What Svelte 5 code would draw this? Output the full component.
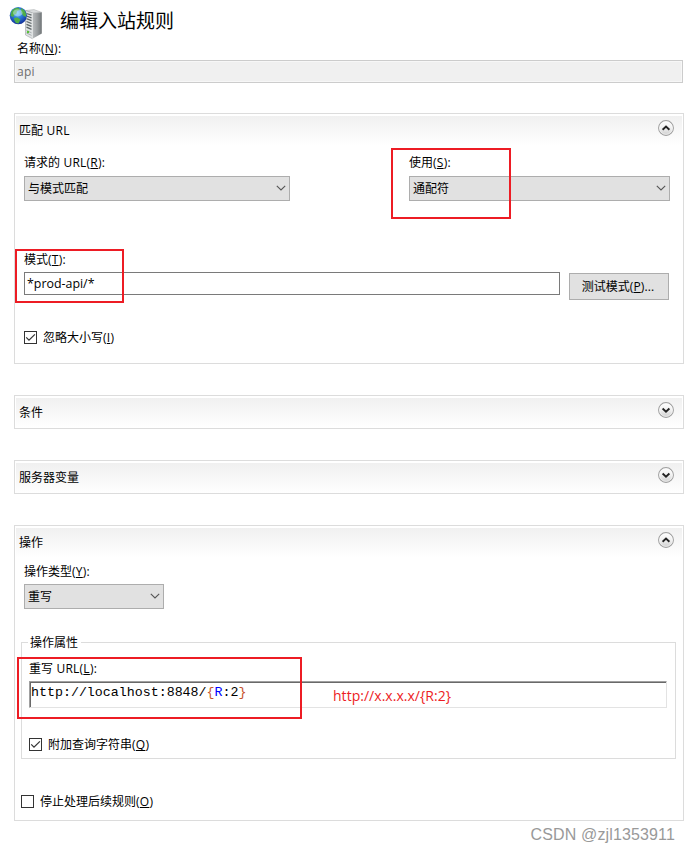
<script>
  let ignoreCase = $state(true);
  let appendQuery = $state(true);
  let stopProcessing = $state(false);
</script>

{#snippet label(text, latin, key, tail = '')}
  <span class="label">{text}{#if latin}<span class="latin">{latin}</span>{/if}<span class="latin">(<u>{key}</u>){tail}</span></span>
{/snippet}

{#snippet toggle(open)}
  <svg class="toggle" width="16" height="16" viewBox="0 0 16 16">
    <defs>
      <linearGradient id="knob" x1="0" y1="0" x2="0" y2="1">
        <stop offset="0" stop-color="#fff" />
        <stop offset="0.5" stop-color="#f0f0f0" />
        <stop offset="1" stop-color="#cccccc" />
      </linearGradient>
    </defs>
    <circle cx="8" cy="8" r="7.4" fill="url(#knob)" stroke="#a0a0a0" stroke-width="1.1" />
    <circle cx="8" cy="8" r="6.4" fill="none" stroke="#fff" stroke-width="0.6" />
    <path d={open ? 'M4.6 9.7 8 6.6l3.4 3.1' : 'M4.6 6.5 8 9.6l3.4-3.1'} fill="none" stroke="#222" stroke-width="1.9" />
  </svg>
{/snippet}

{#snippet select(text, cls)}
  <div class="select {cls}">
    <span>{text}</span>
    <svg width="10" height="6" viewBox="0 0 10 6"><path d="M.8.8 5 4.9 9.2.8" fill="none" stroke="#555" stroke-width="1.1" /></svg>
  </div>
{/snippet}

{#snippet check(on)}
  <svg class="check" width="13" height="13" viewBox="0 0 13 13">
    <rect x=".5" y=".5" width="12" height="12" fill="#fff" stroke="#333" />
    {#if on}<path d="M2.2 6.3 5 9.2 10.9 3.3" fill="none" stroke="#333" stroke-width="1.2" />{/if}
  </svg>
{/snippet}

<main>
  <header>
    <svg class="logo" width="34" height="34" viewBox="0 0 34 34">
      <defs>
        <radialGradient id="globe" cx=".45" cy=".35" r=".65">
          <stop offset="0" stop-color="#6fc4fb" />
          <stop offset=".5" stop-color="#2a78d6" />
          <stop offset="1" stop-color="#14309a" />
        </radialGradient>
        <linearGradient id="side">
          <stop offset="0" stop-color="#b9bcbe" />
          <stop offset=".5" stop-color="#9b9fa1" />
          <stop offset="1" stop-color="#6f7476" />
        </linearGradient>
      </defs>
      <path d="M16.5 4.5 25 3.6 32.8 6.4 24 7Z" fill="#d9dcdd" stroke="#a4a8aa" stroke-width=".5" />
      <path d="M23.5 7 32.8 6.4V27.5L23.5 32.8Z" fill="url(#side)" />
      <path d="M16.5 4.5 23.5 7V32.8L16.5 29Z" fill="#dfe2e3" stroke="#8d9294" stroke-width=".5" />
      <path d="M17.5 7.5 22.5 9.2M17.5 10 22.5 11.8M17.5 12.7 22.5 14.6M17.5 15.5 22.5 17.5M17.5 18.3 22.5 20.4M17.5 21.2 22.5 23.3" stroke="#5e6668" stroke-width="1.3" />
      <path d="M17.5 24.5 22.5 26.8M17.5 27 22.5 29.4" stroke="#a7adaf" />
      <path d="M23.5 7V32.8" stroke="#f1f3f3" stroke-width=".7" />
      <circle cx="19" cy="26" r="1.2" fill="#55c236" />
      <circle cx="9.3" cy="9.6" r="8.6" fill="url(#globe)" />
      <path d="M2.5 5.3C4.5 2.4 7 1.3 9.5 1.8L11 4 8 5 7.5 7.5 5 9 4.5 11 1.5 10ZM12 2 15.5 4.5 17.2 8 16.8 11 14 9.5 12 6ZM5 12 8.5 11.5 11.5 13.5 9.5 17.5 7 17 5.5 14.5Z" fill="#4fae49" />
      <ellipse cx="8.8" cy="6.8" rx="4.8" ry="3.6" fill="#d9f2ff" opacity=".45" />
    </svg>
    <h1>编辑入站规则</h1>
  </header>
  <div class="name-label">{@render label('名称', '', 'N', ':')}</div>
  <div class="name-input latin">api</div>

  <section class="panel match">
    <div class="head"><span>匹配<span class="latin wide">&nbsp;URL</span></span>{@render toggle(true)}</div>
    <div class="selects">
      <div class="field">{@render label('请求的', '\u00a0URL', 'R', ':')}{@render select('与模式匹配', 'w-url')}</div>
      <div class="field">{@render label('使用', '', 'S', ':')}{@render select('通配符', 'w-using')}
        <div class="mark using"></div>
      </div>
    </div>
    <div class="pattern">
      <div class="field">{@render label('模式', '', 'T', ':')}
        <div class="text-input latin">*prod-api/*</div>
        <div class="mark pat"></div>
      </div>
      <button>测试模式<span class="latin">(<u>P</u>)...</span></button>
    </div>
    <div class="row ignore">{@render check(ignoreCase)}{@render label('忽略大小写', '', 'I')}</div>
  </section>

  <section class="panel closed"><div class="head"><span>条件</span>{@render toggle(false)}</div></section>
  <section class="panel closed"><div class="head"><span>服务器变量</span>{@render toggle(false)}</div></section>

  <section class="panel action">
    <div class="head"><span>操作</span>{@render toggle(true)}</div>
    <div class="field type">{@render label('操作类型', '', 'Y', ':')}{@render select('重写', 'w-type')}</div>
    <div class="group">
      <span class="legend">操作属性</span>
      {@render label('重写', '\u00a0URL', 'L', ':')}
      <div class="rewrite"><code>http://localhost:8848/<i>{'{'}</i><b>R</b>:2<i>{'}'}</i></code></div>
      <div class="row">{@render check(appendQuery)}{@render label('附加查询字符串', '', 'Q')}</div>
      <div class="mark url"></div>
      <span class="note">http://x.x.x.x/{'{R:2}'}</span>
    </div>
    <div class="row stop">{@render check(stopProcessing)}{@render label('停止处理后续规则', '', 'O')}</div>
  </section>
  <footer>CSDN @zjl1353911</footer>
</main>

<style>
  :global(body) { background: #fff; }
  main, main * { box-sizing: border-box; }
  main {
    width: 689px; height: 852px; padding: 0 5px 0 14px; overflow: hidden;
    display: flex; flex-direction: column;
    font: 12px/16px "Noto Sans CJK SC", sans-serif; color: #000;
  }
  .latin { font-family: "Open Sans", "Noto Sans", sans-serif; line-height: 1; }
  .label .latin { letter-spacing: 0.25px; }
  .latin.wide { letter-spacing: 0.3px; }
  .label, .select span { white-space: nowrap; }
  u { text-decoration: underline; text-underline-offset: 1px; text-decoration-thickness: 1px; text-decoration-skip-ink: none; }
  header { display: flex; height: 40px; margin-left: -5px; }
  .logo { margin-top: 6px; flex: none; }
  h1 { margin: 6px 0 0 17px; font-size: 19px; line-height: 28px; font-weight: 400; }
  .name-label { height: 20px; padding-left: 3px; display: flex; }
  .name-label .label, .name-label { line-height: 15px; }
  .name-input { height: 23px; width: 669px; border: 1px solid #ccc; background: #f0f0f0; color: #6d6d6d; padding-left: 2px; line-height: 21px; letter-spacing: .3px; box-shadow: inset 0 0 0 1px #f7f7f7; }
  .panel { border: 1px solid #dcdcdc; width: 670px; flex: none; display: flex; flex-direction: column; padding: 2px 1px 1px; }
  .head { height: 30px; flex: none; display: flex; justify-content: space-between; padding: 6px 8px 0 3px; background: linear-gradient(#f0f0f0, #fff); }
  .toggle { flex: none; margin-top: -2px; }
  .match { height: 251px; margin-top: 30px; }
  .field { position: relative; display: flex; flex-direction: column; }
  .selects { display: flex; gap: 119px; padding: 8px 0 0 8px; }
  .select { height: 25px; margin-top: 6px; border: 1px solid #adadad; background: #e1e1e1; display: flex; align-items: center; justify-content: space-between; padding: 0 3px 1px 3px; }
  .w-url { width: 266px; }
  .w-using { width: 261px; }
  .w-type { width: 140px; }
  .pattern { display: flex; gap: 9px; padding: 50px 0 0 8px; }
  .text-input { width: 536px; height: 23px; margin-top: 5px; border: 1px solid #7a7a7a; padding-left: 2px; line-height: 22px; font-size: 12.4px; letter-spacing: 0; }
  button { width: 100px; height: 27px; margin: 22px 0 0; padding: 0 2px 1px 0; border: 1px solid #adadad; background: #e1e1e1; font: inherit; color: #000; }
  button .latin { letter-spacing: 0.1px; }
  .row { display: flex; align-items: center; gap: 6px; height: 16px; }
  .check { flex: none; }
  .ignore { margin: 29px 0 0 8px; }
  .closed { height: 34px; margin-top: 31px; }
  .action { height: 296px; margin-top: 31px; }
  .type { margin: 5px 0 0 8px; }
  .type .select { margin-top: 5px; }
  .group { position: relative; margin: 33px 0 0 5px; width: 655px; height: 117px; border: 1px solid #dcdcdc; padding: 17px 8px 0 7px; display: flex; flex-direction: column; }
  .legend { position: absolute; left: 6px; top: -9px; background: #fff; padding: 0 3px 0 2px; }
  .rewrite { width: 638px; height: 27px; margin-top: 5px; border: 1px solid #e3e3e3; border-top-color: #a0a0a0; border-left-color: #a0a0a0; box-shadow: inset 1px 1px #696969; padding: 3px 0 0 1px; flex: none; }
  code { font: 13.3px/15px "Liberation Mono", monospace; display: block; }
  code i { font-style: normal; color: #c5532d; }
  code b { font-weight: 400; color: #00f; }
  .group .row { margin-top: 28px; }
  .note { position: absolute; left: 311px; top: 43px; font: 14px/20px "Open Sans", "Noto Sans", sans-serif; color: #ed1c24; letter-spacing: .03px; }
  .mark { position: absolute; border: 2px solid #ed1c24; pointer-events: none; }
  .using { left: -18px; top: -6px; width: 120px; height: 71px; }
  .pat { left: -9px; top: -2px; width: 109px; height: 54px; }
  .url { left: -5px; top: 14px; width: 285px; height: 62px; }
  .stop { margin: 34px 0 0 5px; }
  footer { align-self: flex-end; margin: 4px 9px 0 0; font: 16px/20px "Liberation Sans", Arial, sans-serif; letter-spacing: .14px; color: #999; }
</style>
